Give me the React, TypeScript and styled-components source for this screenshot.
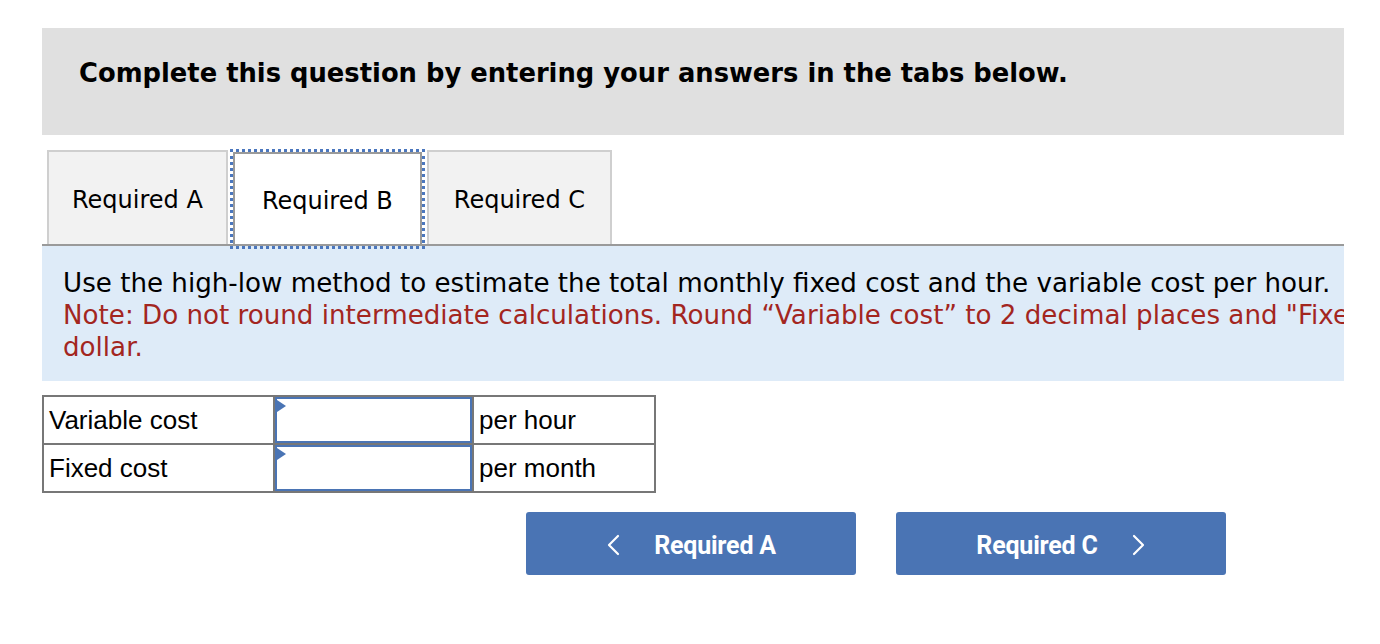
import React from "react";
import styled, { createGlobalStyle } from "styled-components";

const Global = createGlobalStyle`
  html, body { margin: 0; padding: 0; background: #fff; }
  body { font-family: "DejaVu Sans", Verdana, sans-serif; color: #000; }
`;

const Page = styled.div`
  width: 1302px;
  padding: 28px 0 0 42px;
`;

const Header = styled.div`
  height: 107px;
  box-sizing: border-box;
  padding: 30px 37px 0;
  background: #e0e0e0;
`;

const Title = styled.h1`
  margin: 0;
  font-size: 25.8px;
  font-weight: bold;
  line-height: 30px;
  white-space: nowrap;
`;

const TabRow = styled.div`
  display: flex;
  align-items: flex-end;
  gap: 5px;
  margin-top: 15px;
  padding-left: 5px;
  border-bottom: 2px solid #9a9a9a;
`;

const Tab = styled.button<{ $active?: boolean; $pad: number }>`
  height: 94px;
  box-sizing: border-box;
  padding: 3px ${(p) => p.$pad}px 0;
  margin-bottom: ${(p) => (p.$active ? -2 : 0)}px;
  font-family: "DejaVu Sans", Verdana, sans-serif;
  font-size: 24px;
  color: #000;
  white-space: nowrap;
  background: ${(p) => (p.$active ? "#fff" : "#f2f2f2")};
  border: 2px solid ${(p) => (p.$active ? "#9a9a9a" : "#cfcfcf")};
  border-bottom: ${(p) => (p.$active ? "2px solid #9a9a9a" : "none")};
  outline: ${(p) => (p.$active ? "3px dotted #4b77be" : "none")};
  cursor: pointer;
`;

const Panel = styled.div`
  background: #deebf8;
  padding: 21px 0 18px 21px;
  overflow: hidden;
`;

const Line = styled.div<{ $note?: boolean }>`
  font-size: 26.15px;
  line-height: 32px;
  white-space: nowrap;
  color: ${(p) => (p.$note ? "#a3261f" : "#000")};
`;

const Table = styled.table`
  margin-top: 14px;
  border-collapse: collapse;
  border: 2px solid #777;
  font-family: "Liberation Sans", Arial, sans-serif;
  font-size: 26px;
`;

const Cell = styled.td<{ $w: number }>`
  width: ${(p) => p.$w}px;
  height: 46px;
  box-sizing: border-box;
  border: 2px solid #777;
  padding: 0 5px;
  white-space: nowrap;
`;

const InputCell = styled.td`
  width: 199px;
  height: 46px;
  box-sizing: border-box;
  padding: 0;
  border: 2px solid #777;
  position: relative;
`;

const Input = styled.input`
  display: block;
  width: 100%;
  height: 46px;
  box-sizing: border-box;
  border: 2px solid #4a74b4;
  margin: 0;
  padding: 0 8px;
  font-size: 22px;
  outline: none;
`;

const Marker = styled.span`
  position: absolute;
  left: 2px;
  top: 3px;
  width: 0;
  height: 0;
  border-top: 6px solid transparent;
  border-bottom: 6px solid transparent;
  border-left: 9px solid #4a74b4;
`;

const Nav = styled.div`
  display: flex;
  gap: 40px;
  margin: 19px 0 0 484px;
`;

const NavButton = styled.button`
  width: 330px;
  height: 63px;
  padding: 3px 0 0;
  border: none;
  border-radius: 3px;
  background: #4a74b4;
  color: #fff;
  font-family: Roboto, "Liberation Sans", sans-serif;
  font-weight: bold;
  font-size: 25px;
  letter-spacing: -0.2px;
  display: flex;
  align-items: center;
  justify-content: center;
  gap: 34px;
  cursor: pointer;
`;

const Chevron = ({ dir }: { dir: "left" | "right" }) => (
  <svg width="14" height="22" viewBox="0 0 14 22" fill="none">
    <path
      d={dir === "left" ? "M12 2 L3 11 L12 20" : "M2 2 L11 11 L2 20"}
      stroke="#fff"
      strokeWidth="2.2"
      strokeLinecap="round"
      strokeLinejoin="round"
    />
  </svg>
);

export default function App() {
  return (
    <>
      <Global />
      <Page>
        <Header>
          <Title>Complete this question by entering your answers in the tabs below.</Title>
        </Header>
        <TabRow>
          <Tab $pad={23}>Required A</Tab>
          <Tab $active $pad={27}>Required B</Tab>
          <Tab $pad={25}>Required C</Tab>
        </TabRow>
        <Panel>
          <Line>Use the high-low method to estimate the total monthly fixed cost and the variable cost per hour.</Line>
          <Line $note>
            Note: Do not round intermediate calculations. Round “Variable cost” to 2 decimal places and "Fixed cost" to the nearest whole
          </Line>
          <Line $note>dollar.</Line>
        </Panel>
        <Table>
          <tbody>
            <tr>
              <Cell $w={231}>Variable cost</Cell>
              <InputCell>
                <Input aria-label="Variable cost" />
                <Marker />
              </InputCell>
              <Cell $w={182}>per hour</Cell>
            </tr>
            <tr>
              <Cell $w={231}>Fixed cost</Cell>
              <InputCell>
                <Input aria-label="Fixed cost" />
                <Marker />
              </InputCell>
              <Cell $w={182}>per month</Cell>
            </tr>
          </tbody>
        </Table>
        <Nav>
          <NavButton>
            <Chevron dir="left" />
            Required A
          </NavButton>
          <NavButton>
            Required C
            <Chevron dir="right" />
          </NavButton>
        </Nav>
      </Page>
    </>
  );
}
